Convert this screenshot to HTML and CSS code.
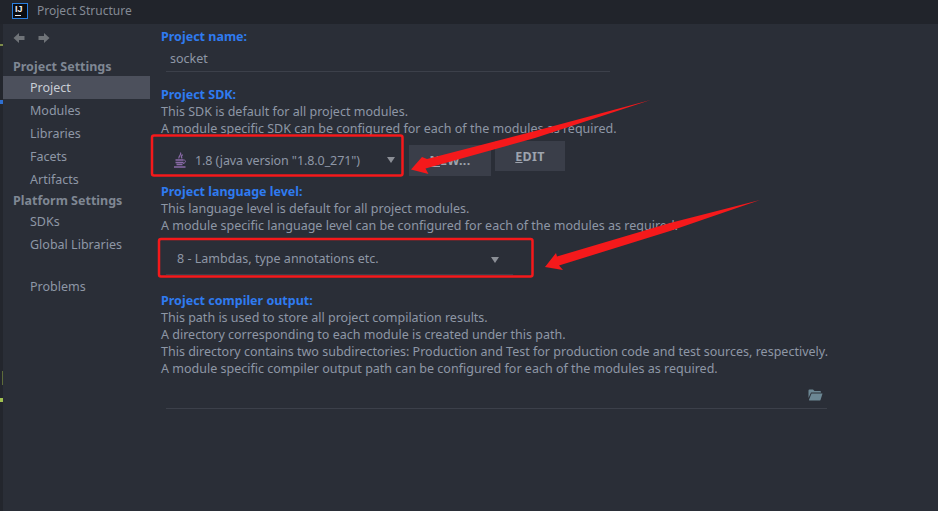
FILE: index.html
```html
<!DOCTYPE html>
<html lang="en">
  <head>
    <meta charset="UTF-8" />
    <title>Project Structure</title>
    <link rel="stylesheet" href="styles.css">
  </head>
  <body>
    <div class="window">
      <div class="titlebar">
        <div class="app-icon"><span class="app-icon-text">IJ</span><span class="app-icon-bar"></span></div>
        <span class="title-text">Project Structure</span>
      </div>

      <div class="body-row">
        <div class="edge-strip">
          <span class="edge-mark edge-dot-top"></span>
          <span class="edge-mark edge-blue"></span>
          <span class="edge-mark edge-bar"></span>
          <span class="edge-mark edge-dot"></span>
        </div>

        <div class="sidebar">
          <div class="nav-arrows">
            <svg width="12" height="12" viewBox="0 0 12 12"><path d="M0.5 6 L6 1 V4 H11.5 V8 H6 V11 Z" fill="#6f7378"/></svg>
            <svg width="12" height="12" viewBox="0 0 12 12"><path d="M11.5 6 L6 1 V4 H0.5 V8 H6 V11 Z" fill="#6f7378"/></svg>
          </div>
          <div class="side-head">Project Settings</div>
          <div class="side-item active">Project</div>
          <div class="side-item">Modules</div>
          <div class="side-item">Libraries</div>
          <div class="side-item">Facets</div>
          <div class="side-item">Artifacts</div>
          <div class="side-head side-head-2">Platform Settings</div>
          <div class="side-item">SDKs</div>
          <div class="side-item">Global Libraries</div>
          <div class="side-item problems">Problems</div>
        </div>

        <div class="content">
          <section class="block-name">
            <div class="label">Project name:</div>
            <div class="field">socket</div>
          </section>

          <section class="block-sdk">
            <div class="label">Project SDK:</div>
            <p>This SDK is default for all project modules.</p>
            <p>A module specific SDK can be configured for each of the modules as required.</p>
            <div class="sdk-row">
              <div class="combo combo-sdk">
                <svg class="java-icon" width="14" height="17" viewBox="0 0 14 17">
                  <path d="M7.5 0.5 C9 3 5 4 6 6.5 M9.5 2.5 C8 4 8 5 9 6.5" fill="none" stroke="#8a6aa8" stroke-width="1.2"/>
                  <path d="M2.5 8 H10.5 M2.5 10.5 H10.5 M3.5 12.5 H9.5 M1 15 H12.5" fill="none" stroke="#8a6aa8" stroke-width="1.4"/>
                  <path d="M10.5 8 C13.5 8 13 11 10 11.5" fill="none" stroke="#8a6aa8" stroke-width="1"/>
                </svg>
                <span class="sdk-name">1.8 (java version "1.8.0_271")</span>
                <span class="caret"></span>
              </div>
              <div class="btn btn-new"><u>N</u>EW...</div>
              <div class="btn btn-edit"><u>E</u>DIT</div>
            </div>
          </section>

          <section class="block-level">
            <div class="label">Project language level:</div>
            <p>This language level is default for all project modules.</p>
            <p>A module specific language level can be configured for each of the modules as required.</p>
            <div class="combo combo-level">
              <span>8 - Lambdas, type annotations etc.</span>
              <span class="caret"></span>
            </div>
          </section>

          <section class="block-output">
            <div class="label">Project compiler output:</div>
            <p>This path is used to store all project compilation results.</p>
            <p>A directory corresponding to each module is created under this path.</p>
            <p>This directory contains two subdirectories: Production and Test for production code and test sources, respectively.</p>
            <p>A module specific compiler output path can be configured for each of the modules as required.</p>
            <div class="path-field">
              <svg width="15" height="12" viewBox="0 0 15 12">
                <path d="M0.5 1.5 Q0.5 0.5 1.5 0.5 H5 L6.5 2 H12 Q13 2 13 3 V3.5 H3 L0.5 9 Z" fill="#6c8794"/>
                <path d="M3.5 4.5 H14.5 L12.5 11 Q12.3 11.5 11.5 11.5 H1.5 Q0.8 11.5 1 10.8 Z" fill="#6c8794"/>
              </svg>
            </div>
          </section>
        </div>
      </div>

      <svg class="markup" width="938" height="511" viewBox="0 0 938 511">
        <rect x="152" y="135.5" width="250.5" height="40" rx="2" fill="none" stroke="#f5191b" stroke-width="2.5"/>
        <rect x="159" y="239" width="373.5" height="37.5" rx="2" fill="none" stroke="#f5191b" stroke-width="2.5"/>
        <path d="M650.5 100 L535 131 L427 159 L422 157 L411 169.5 L428.5 174 L425.5 168.5 L535 138 Z" fill="#f5191b"/>
        <path d="M760 200 L670 223 L557 256.5 L556 253 L545 267 L563 270 L559 265.5 L670 231 Z" fill="#f5191b"/>
      </svg>
    </div>
  </body>
</html>
```

FILE: styles.css
```css
:root {
  --bg: #2a2e37;
  --title-bg: #21242b;
  --text: #8e97a6;
  --blue: #2f7bf0;
  --line: #3c404a;
  --btn: #3a3e49;
}
* {
  box-sizing: border-box;
}
html,
body {
  margin: 0;
  height: 100%;
  background: var(--bg);
}
body {
  font-family: "Noto Sans", "Open Sans", sans-serif;
  font-size: 12.5px;
  letter-spacing: 0.005px;
  color: var(--text);
  overflow: hidden;
}
.window {
  position: relative;
  width: 938px;
  height: 511px;
  overflow: hidden;
}

/* ---------- Title bar ---------- */
.titlebar {
  height: 24px;
  background: var(--title-bg);
  display: flex;
  align-items: center;
  padding-left: 12px;
  gap: 9px;
}
.app-icon {
  width: 16px;
  height: 16px;
  background: #0b0c10;
  border: 1px solid #2a7fe0;
  display: flex;
  flex-direction: column;
  padding: 1px 0 0 2px;
  margin-top: -3px;
}
.app-icon-text {
  color: #f0f0f0;
  font-family: "Liberation Sans", sans-serif;
  font-size: 9px;
  line-height: 8px;
  font-weight: 700;
}
.app-icon-bar {
  width: 6px;
  height: 1px;
  background: #e8e8e8;
  margin-top: 2px;
}
.title-text {
  font-size: 12px;
  color: #848a95;
  margin-top: -3px;
}

/* ---------- Sidebar ---------- */
.body-row {
  display: flex;
  height: 487px;
}
.edge-strip {
  width: 3px;
  background: #23262d;
  display: flex;
  flex-direction: column;
}
.edge-mark {
  display: block;
}
.edge-dot-top {
  margin-top: 20px;
  height: 2px;
  background: #7d8c4a;
}
.edge-blue {
  margin-top: 54px;
  height: 4px;
  background: #2f6fd0;
}
.edge-bar {
  margin: 267px 0 0 2px;
  width: 1px;
  height: 14px;
  background: #5d6b3a;
}
.edge-dot {
  margin-top: 13px;
  height: 4px;
  background: #a0c050;
}
.sidebar {
  width: 147px;
}
.nav-arrows {
  display: flex;
  gap: 13px;
  padding: 8px 0 0 10px;
  height: 34px;
}
.side-head {
  padding-left: 10px;
  height: 18px;
  line-height: 18px;
  font-weight: 700;
  font-size: 12.5px;
  color: #7f8793;
}
.side-head-2 {
  height: 19px;
  line-height: 20px;
}
.side-item {
  height: 23px;
  line-height: 23px;
  padding-left: 27px;
}
.side-item.active {
  background: #4c505c;
  color: #c9ced6;
}
.problems {
  margin-top: 19px;
}

/* ---------- Main panel ---------- */
.content {
  flex: 1;
  padding: 4px 0 0 11px;
}
.label {
  color: var(--blue);
  font-weight: 700;
  height: 17px;
  line-height: 17px;
}
p {
  margin: 0;
  height: 17px;
  line-height: 17px;
  white-space: nowrap;
}
.field {
  margin-left: 5px;
  width: 444px;
  height: 27px;
  line-height: 28px;
  padding-left: 4px;
  border-bottom: 1px solid var(--line);
}
.block-sdk {
  margin-top: 14px;
}
.sdk-row {
  display: flex;
  align-items: flex-start;
  margin-top: 4px;
}
.combo {
  position: relative;
  display: flex;
  align-items: center;
}
.combo-sdk {
  width: 248px;
  height: 30px;
  margin-top: 4px;
  padding-left: 12px;
  gap: 8px;
}
.sdk-name {
  letter-spacing: -0.08px;
}
.java-icon {
  flex: none;
}
.caret {
  position: absolute;
  width: 0;
  height: 0;
  border-left: 4.5px solid transparent;
  border-right: 4.5px solid transparent;
  border-top: 6px solid #8b8f96;
}
.combo-sdk .caret {
  left: 226px;
  top: 12px;
}
.btn {
  background: var(--btn);
  color: #9ea4ae;
  font-weight: 700;
  font-size: 12.5px;
  letter-spacing: 0.3px;
  display: flex;
  align-items: center;
  justify-content: center;
  white-space: pre;
}
.btn-new {
  width: 82px;
  height: 31px;
  margin-top: 4px;
}
.btn-edit {
  width: 70px;
  height: 30px;
  margin-left: 4px;
}
.block-level {
  margin-top: 7px;
}
.combo-level {
  width: 347px;
  height: 34px;
  margin: 7px 0 0 5px;
  padding: 2px 0 0 11px;
  border-bottom: 1px solid var(--line);
}
.combo-level .caret {
  left: 325px;
  top: 16px;
}
.block-output {
  margin-top: 17px;
}
.path-field {
  margin: 8px 0 0 5px;
  width: 661px;
  height: 24px;
  border-bottom: 1px solid var(--line);
  display: flex;
  justify-content: flex-end;
  padding: 4px 4px 0 0;
}

/* ---------- Red annotations drawn on top ---------- */
.markup {
  position: absolute;
  left: 0;
  top: 0;
  pointer-events: none;
}
```
